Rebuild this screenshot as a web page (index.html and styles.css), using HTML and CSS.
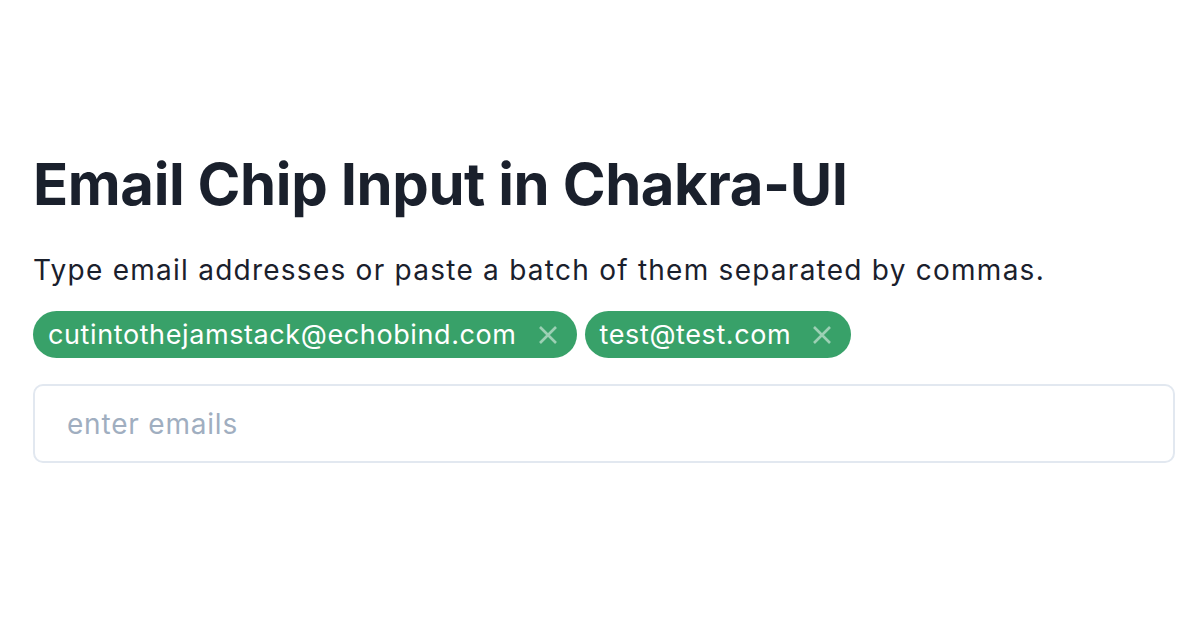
FILE: index.html
```html
<html lang="en">
    <head>
        <title>Email Chip Input</title>
        <link rel="stylesheet" href="styles.css">
    </head>
    <body>
        <div class="page">
            <h1 class="title">Email Chip Input in Chakra-UI</h1>
            <p class="hint">Type email addresses or paste a batch of them separated by commas.</p>
            <div class="chips">
                <span class="chip">
                    <span class="chip-label">cutintothejamstack@echobind.com</span>
                    <button class="chip-close" aria-label="remove">
                        <svg viewBox="0 0 20 20" width="20" height="20"><path d="M2 2 L18 18 M18 2 L2 18" /></svg>
                    </button>
                </span>
                <span class="chip">
                    <span class="chip-label">test@test.com</span>
                    <button class="chip-close" aria-label="remove">
                        <svg viewBox="0 0 20 20" width="20" height="20"><path d="M2 2 L18 18 M18 2 L2 18" /></svg>
                    </button>
                </span>
            </div>
            <input class="email-input" type="text" placeholder="enter emails">
        </div>
    </body>
</html>
```

FILE: styles.css
```css
body {
    margin: 0;
    padding: 0;
    background-color: white;
    font-family: Inter, "Noto Sans", sans-serif;
    color: #1a202c;
}

.page {
    display: flex;
    flex-direction: column;
    padding: 148px 25px 0 33px;
}

.title {
    margin: 0;
    font-size: 58px;
    font-weight: 700;
    line-height: 72px;
    letter-spacing: -0.4px;
}

.hint {
    margin: 30px 0 0;
    font-size: 28px;
    line-height: 40px;
    letter-spacing: 1.25px;
}

.chips {
    display: flex;
    gap: 8px;
    margin-top: 21px;
}

.chip {
    display: flex;
    align-items: center;
    height: 47px;
    padding: 0 18px 0 15px;
    border-radius: 999px;
    background-color: #38a169;
    color: white;
    font-size: 27px;
    letter-spacing: 0.6px;
}

.chip-close {
    display: flex;
    align-items: center;
    justify-content: center;
    margin-left: 20px;
    padding: 0;
    border: none;
    background: none;
    width: 22px;
    height: 22px;
}

.chip-close svg {
    stroke: rgba(255, 255, 255, 0.5);
    stroke-width: 2.6;
    fill: none;
}

.email-input {
    margin-top: 26px;
    height: 79px;
    box-sizing: border-box;
    border: 2px solid #e2e8f0;
    border-radius: 10px;
    padding: 0 32px;
    font-family: Inter, "Noto Sans", sans-serif;
    font-size: 28px;
    letter-spacing: 0.8px;
    color: #1a202c;
    outline: none;
}

.email-input::placeholder {
    color: #a0aec0;
}
```
